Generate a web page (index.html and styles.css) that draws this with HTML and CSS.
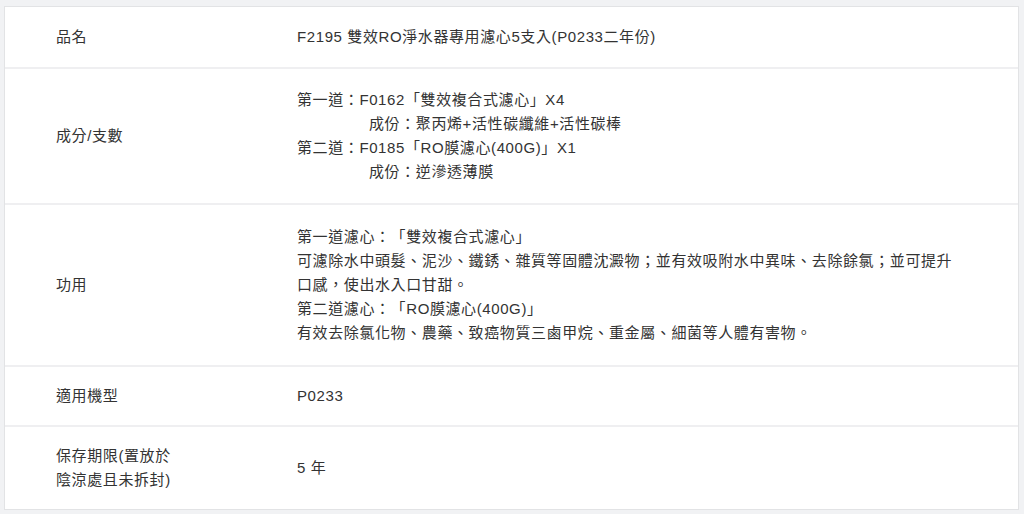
FILE: index.html
```html
<!DOCTYPE html>
<html lang="zh-Hant">
<head>
<meta charset="utf-8">
<link rel="stylesheet" href="styles.css">
</head>
<body>
<div class="card">
  <div class="row r1">
    <div class="label">品名</div>
    <div class="value">F2195 雙效RO淨水器專用濾心5支入(P0233二年份)</div>
  </div>
  <div class="row r2">
    <div class="label">成分/支數</div>
    <div class="value">
      <div>第一道：F0162「雙效複合式濾心」X4</div>
      <div class="indent">成份：聚丙烯+活性碳纖維+活性碳棒</div>
      <div>第二道：F0185「RO膜濾心(400G)」X1</div>
      <div class="indent">成份：逆滲透薄膜</div>
    </div>
  </div>
  <div class="row r3">
    <div class="label">功用</div>
    <div class="value">
      <div>第一道濾心：「雙效複合式濾心」</div>
      <div>可濾除水中頭髮、泥沙、鐵銹、雜質等固體沈澱物；並有效吸附水中異味、去除餘氯；並可提升口感，使出水入口甘甜。</div>
      <div>第二道濾心：「RO膜濾心(400G)」</div>
      <div>有效去除氯化物、農藥、致癌物質三鹵甲烷、重金屬、細菌等人體有害物。</div>
    </div>
  </div>
  <div class="row r4">
    <div class="label">適用機型</div>
    <div class="value">P0233</div>
  </div>
  <div class="row r5">
    <div class="label">保存期限(置放於陰涼處且未拆封)</div>
    <div class="value">5 年</div>
  </div>
</div>
</body>
</html>
```

FILE: styles.css
```css
html, body {
  margin: 0;
  padding: 0;
  background: #f1f2f4;
}
body {
  padding: 6px 5px 5px 4px;
  font-family: "Liberation Sans", "Noto Sans CJK TC", sans-serif;
  font-size: 15px;
  letter-spacing: 0.6px;
  color: #333;
  text-spacing-trim: space-all;
}
.card {
  background: #fff;
  border: 1px solid #e2e3e5;
}
.row {
  display: grid;
  grid-template-columns: 292px 1fr;
  align-items: center;
  border-top: 2px solid #efeff1;
  line-height: 24px;
}
.row:first-child {
  border-top: none;
}
.label {
  padding-left: 51px;
  width: 120px;
}
.value {
  padding-right: 58px;
}
.r1 { min-height: 60px; }
.r2 { padding: 19px 0; }
.r3 { padding: 20px 0; }
.r4 { min-height: 58px; }
.r5 { padding: 17px 0; }
.indent {
  padding-left: 72px;
}
```
